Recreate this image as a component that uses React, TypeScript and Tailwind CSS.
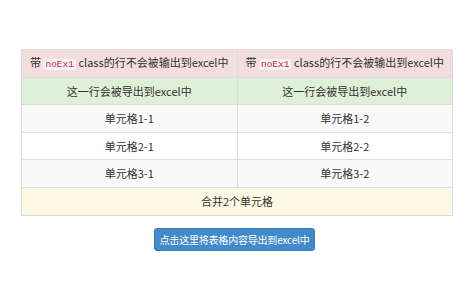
const rows = [
  { cells: ['单元格1-1', '单元格1-2'], bg: 'bg-[#f9f9f9]' },
  { cells: ['单元格2-1', '单元格2-2'], bg: 'bg-white' },
  { cells: ['单元格3-1', '单元格3-2'], bg: 'bg-[#f9f9f9]' },
]

function NoExcelCell() {
  return (
    <td className="border border-[#ddd] h-[27.6px] p-0 text-center whitespace-nowrap">
      带{' '}
      <code className="font-['Liberation_Mono',monospace] text-[9.5px] text-[#c7254e] bg-[#f9f2f4] px-[2px] rounded-[2px]">
        noEx1
      </code>{' '}
      class的行不会被输出到excel中
    </td>
  )
}

export default function App() {
  return (
    <div className="w-[474px] h-[305px] bg-white font-['Noto_Sans_CJK_SC','Noto_Sans',sans-serif] text-[11px] text-[#333]">
      <div className="pt-[49px] px-[21px]">
        <table className="w-[432px] border-collapse table-fixed">
          <tbody>
            <tr className="bg-[#f2dede]">
              <NoExcelCell />
              <NoExcelCell />
            </tr>
            <tr className="bg-[#dff0d8]">
              <td className="border border-[#ddd] h-[27.6px] p-0 text-center">这一行会被导出到excel中</td>
              <td className="border border-[#ddd] h-[27.6px] p-0 text-center">这一行会被导出到excel中</td>
            </tr>
            {rows.map((row) => (
              <tr key={row.cells[0]} className={row.bg}>
                {row.cells.map((c) => (
                  <td key={c} className="border border-[#ddd] h-[27.6px] p-0 text-center">
                    {c}
                  </td>
                ))}
              </tr>
            ))}
            <tr className="bg-[#fcf8e3]">
              <td colSpan={2} className="border border-[#ddd] h-[27.6px] p-0 text-center">
                合并2个单元格
              </td>
            </tr>
          </tbody>
        </table>
        <div className="flex justify-center pt-[12px] pr-[5px]">
          <button className="w-[161px] h-[23px] rounded-[3px] bg-[#428bca] border border-[#357ebd] text-white text-[10px] whitespace-nowrap tracking-[-0.2px]">
            点击这里将表格内容导出到excel中
          </button>
        </div>
      </div>
    </div>
  )
}
